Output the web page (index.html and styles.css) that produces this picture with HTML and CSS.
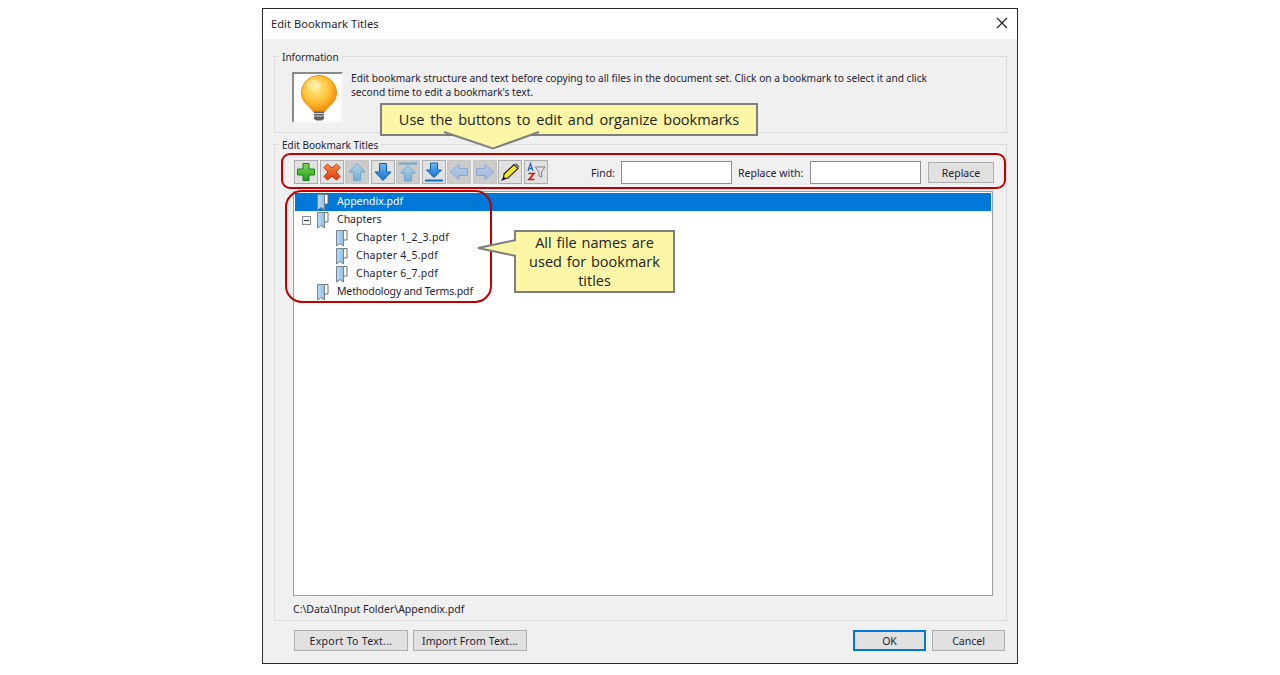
FILE: index.html
```html
<!DOCTYPE html>
<html lang="en">
<head>
<meta charset="utf-8">
<title>Edit Bookmark Titles</title>
<link rel="stylesheet" href="styles.css">
</head>
<body>
<svg class="defs" width="0" height="0" aria-hidden="true">
  <defs>
    <linearGradient id="up" x1="0" y1="0" x2="0" y2="1"><stop offset="0" stop-color="#6db8f2"/><stop offset="1" stop-color="#1271d2"/></linearGradient>
    <linearGradient id="upd" x1="0" y1="0" x2="0" y2="1"><stop offset="0" stop-color="#b4d6ea"/><stop offset="1" stop-color="#74acd2"/></linearGradient>
    <linearGradient id="sided" x1="0" y1="0" x2="0" y2="1"><stop offset="0" stop-color="#bccee6"/><stop offset="1" stop-color="#9db6db"/></linearGradient>
    <linearGradient id="grn" x1="0" y1="0" x2="0" y2="1"><stop offset="0" stop-color="#7fdc52"/><stop offset="1" stop-color="#219c1c"/></linearGradient>
    <linearGradient id="red" x1="0" y1="0" x2="0" y2="1"><stop offset="0" stop-color="#ff8a45"/><stop offset="1" stop-color="#e2380e"/></linearGradient>
    <radialGradient id="bulb" cx="0.42" cy="0.36" r="0.62"><stop offset="0" stop-color="#ffeb90"/><stop offset="0.55" stop-color="#ffc63c"/><stop offset="1" stop-color="#f2900f"/></radialGradient>
    <linearGradient id="bmf" x1="0" y1="0" x2="1" y2="0"><stop offset="0" stop-color="#c2dcf2"/><stop offset="1" stop-color="#8fbce4"/></linearGradient>
    <symbol id="bm" viewBox="0 0 13 18">
      <path d="M8.500 1.500H12V11H8.500z" fill="#fff" stroke="#6c6c6c"/>
      <path d="M1.500 1.500H8.500V17L5 14.500L1.500 17z" fill="url(#bmf)" stroke="#6f8496"/>
    </symbol>
  </defs>
</svg>
<main class="dialog">
  <header class="titlebar">
    <span class="title">Edit Bookmark Titles</span>
    <svg class="close" width="12" height="12" viewBox="0 0 12 12"><path d="M1 1L11 11M11 1L1 11" stroke="#222" stroke-width="1.200" fill="none"/></svg>
  </header>
  <div class="content">
    <fieldset class="group info-group">
      <legend>Information</legend>
      <div class="info-row">
        <div class="bulb-box">
          <svg width="47" height="47" viewBox="0 0 47 47">
            <path d="M25 1.500C15 1.500 7.500 9.500 7.500 19C7.500 26.500 13 30.500 17 34.500L19 37.500H31L33 34.500C37 30.500 42.500 26.500 42.500 19C42.500 9.500 35 1.500 25 1.500z" fill="url(#bulb)" stroke="#e8901c" stroke-width="1"/>
            <ellipse cx="20" cy="11" rx="7" ry="5" fill="#fff6c8" opacity="0.55"/>
            <path d="M20 37.500h10v7l-2 2h-6l-2-2z" fill="#5e5e5e"/>
            <path d="M20 39.500h10M20 42h10" stroke="#d4d4d4" stroke-width="1"/>
          </svg>
        </div>
        <p class="info-text">Edit bookmark structure and text before copying to all files in the document set. Click on a bookmark to select it and click<br>second time to edit a bookmark's text.</p>
      </div>
    </fieldset>
    <fieldset class="group edit-group">
      <legend>Edit Bookmark Titles</legend>
      <div class="toolbar">
        <div class="tools">
          <span class="tool"><svg viewBox="0 0 20 20"><path d="M7 1.500h6v5.500h5.500v6H13v5.500H7V13H1.500V7H7z" fill="url(#grn)" stroke="#1c7c18"/></svg></span>
          <span class="tool"><svg viewBox="0 0 20 20"><path d="M5.500 2L10 6L14.500 2L18 5.500L14 10L18 14.500L14.500 18L10 14L5.500 18L2 14.500L6 10L2 5.500z" fill="url(#red)" stroke="#b8380e"/></svg></span>
          <span class="tool off"><svg viewBox="0 0 20 20"><path d="M10 1.500L18 10H13.500V18.500H6.500V10H2z" fill="url(#upd)" stroke="#6ea6cc"/></svg></span>
          <span class="tool"><svg viewBox="0 0 20 20"><path d="M10 18.500L18 10H13.500V1.500H6.500V10H2z" fill="url(#up)" stroke="#0f5fb0"/></svg></span>
          <span class="tool off"><svg viewBox="0 0 20 20"><path d="M1 1.500H19" stroke="#6ea6cc" stroke-width="2"/><path d="M10 3.500L17.500 11H13.500V19H6.500V11H2.500z" fill="url(#upd)" stroke="#6ea6cc"/></svg></span>
          <span class="tool"><svg viewBox="0 0 20 20"><path d="M10 15.500L17.500 8H13.500V1H6.500V8H2.500z" fill="url(#up)" stroke="#0f5fb0"/><path d="M1 18.500H19" stroke="#0f6fca" stroke-width="2"/></svg></span>
          <span class="tool off"><svg viewBox="0 0 20 20"><path d="M1.500 10L10 2.500V6.500H18.500V13.500H10V17.500z" fill="url(#sided)" stroke="#8aa6d2"/></svg></span>
          <span class="tool off"><svg viewBox="0 0 20 20"><path d="M18.500 10L10 2.500V6.500H1.500V13.500H10V17.500z" fill="url(#sided)" stroke="#8aa6d2"/></svg></span>
          <span class="tool"><svg viewBox="0 0 20 20"><path d="M4 12L14 2.500L18 6.500L8 16L3.500 16.800z" fill="#f8ec1c" stroke="#111" stroke-width="1.100"/><path d="M14 2.500L18 6.500L19.500 4.500L16.500 1.200z" fill="#777"/><path d="M1 19L3.500 14.500L6 17z" fill="#111"/></svg></span>
          <span class="tool"><svg viewBox="0 0 20 20"><path d="M9.500 5H19L15.500 10V15L13 14V10z" fill="#e4e4e4" stroke="#808080"/><path d="M2 9L4.500 1.500L7 9M3 6.500H6" fill="none" stroke="#2a6cc8" stroke-width="1.300"/><path d="M2.500 11.500H8L3 17.500H8.500" fill="none" stroke="#c81e1e" stroke-width="1.700"/></svg></span>
        </div>
        <label class="lbl find-lbl">Find:</label>
        <span class="field"></span>
        <label class="lbl repl-lbl">Replace with:</label>
        <span class="field"></span>
        <button class="btn replace">Replace</button>
      </div>
      <div class="tree">
        <div class="row selected"><svg class="bm"><use href="#bm"/></svg><span>Appendix.pdf</span></div>
        <div class="row"><span class="twist"><i></i></span><svg class="bm"><use href="#bm"/></svg><span>Chapters</span></div>
        <div class="row sub"><svg class="bm"><use href="#bm"/></svg><span>Chapter 1_2_3.pdf</span></div>
        <div class="row sub"><svg class="bm"><use href="#bm"/></svg><span>Chapter 4_5.pdf</span></div>
        <div class="row sub"><svg class="bm"><use href="#bm"/></svg><span>Chapter 6_7.pdf</span></div>
        <div class="row long"><svg class="bm"><use href="#bm"/></svg><span>Methodology and Terms.pdf</span></div>
      </div>
      <p class="status">C:\Data\Input Folder\Appendix.pdf</p>
    </fieldset>
    <footer class="footer">
      <button class="btn wide export">Export To Text...</button>
      <button class="btn wide">Import From Text...</button>
      <span class="spacer"></span>
      <button class="btn action primary">OK</button>
      <button class="btn action">Cancel</button>
    </footer>
  </div>
  <div class="ring ring-tools"></div>
  <div class="ring ring-tree"></div>
  <div class="callout callout-top">
    <svg class="tail tail-top" width="97" height="17" viewBox="0 0 97 17"><path d="M1 -2L50 14.500L96 -2" fill="#fbf7a6" stroke="#7f7f7f" stroke-width="2"/></svg>
    Use the buttons to edit and organize bookmarks
  </div>
  <div class="callout callout-side">
    <svg class="tail tail-side" width="40" height="18" viewBox="0 0 40 18"><path d="M40 1L2 9L40 17" fill="#fbf7a6" stroke="#7f7f7f" stroke-width="2"/></svg>
    All file names are<br>used for bookmark<br>titles
  </div>
</main>
</body>
</html>
```
FILE: styles.css
```css
* { box-sizing: border-box; }
html, body { margin: 0; padding: 0; background: #fff; }
body { font-family: "Noto Sans", sans-serif; font-size: 10.500px; color: #1f2330; padding-top: 8px; overflow: hidden; }
.defs { position: absolute; }
.dialog { position: relative; width: 756px; height: 656px; margin: 0 auto; border: 1px solid #2a2a2a; background: #f0f0f0; display: flex; flex-direction: column; }
.titlebar { height: 30px; background: #fff; display: flex; align-items: center; justify-content: space-between; padding: 0 9px 0 8px; }
.title { font-size: 11.200px; margin-bottom: 2px; }
.close { margin-bottom: 2px; }
.content { flex: 1; display: flex; flex-direction: column; padding: 9px 10px 0 11px; }
.group { margin: 0; border: 1px solid #dcdcdc; min-width: 0; }
.group legend { padding: 2px 3px 0; line-height: 14px; font-size: 10px; }
.info-group { height: 85px; padding: 8px 17px 0; }
.info-group legend { margin-left: -13px; }
.info-row { display: flex; gap: 8px; }
.bulb-box { width: 51px; height: 51px; background: #fff; border: 2px solid; border-color: #8a8a8a #f6f6f6 #f6f6f6 #8a8a8a; display: flex; align-items: center; justify-content: center; flex: none; }
.info-text { margin: -1px 0 0; line-height: 14px; white-space: nowrap; font-size: 10.180px; }
.edit-group { height: 485px; margin-top: 3px; padding: 8px 12px 0 18px; }
.edit-group legend { margin-left: -14px; }
.toolbar { display: flex; align-items: center; height: 24px; }
.tools { display: flex; gap: 1.500px; width: 297px; margin-left: 1px; flex: none; }
.tool { width: 24px; height: 24px; background: #e1e1e1; border: 1px solid #adadad; display: flex; align-items: center; justify-content: center; flex: none; }
.tool svg { width: 20px; height: 20px; display: block; }
.tool.off { background: #cbcbcb; border-color: #c4c4c4; }
.lbl { white-space: nowrap; margin-top: 2px; }
.find-lbl { width: 30px; }
.repl-lbl { width: 72px; margin-left: 6px; }
.field { width: 111px; height: 23px; align-self: flex-end; background: #fff; border: 1px solid #8f8f8f; flex: none; }
.btn { font: inherit; color: inherit; background: #e1e1e1; border: 1px solid #adadad; height: 21px; padding: 0; }
.replace { width: 66px; margin: 1px 0 0 7px; }
.tree { height: 405px; margin: 7px 1px 0 0; background: #fff; border: 1px solid #a0a0a0; padding: 1px; }
.row { height: 18px; display: flex; align-items: center; padding-left: 21px; white-space: nowrap; position: relative; }
.row span:last-child { margin: 0 0 2px 8px; }
.row.sub { padding-left: 40px; letter-spacing: 0.250px; }
.row.long { letter-spacing: -0.150px; }
.row.selected { background: #0078d7; color: #fff; }
.bm { width: 13px; height: 18px; flex: none; }
.twist { position: absolute; left: 7px; top: 5px; width: 9px; height: 9px; border: 1px solid #8a8f96; background: #eef0f2; }
.twist i { display: block; width: 5px; height: 1px; margin: 3px 1px; background: #333; }
.status { margin: 6px 0 0; line-height: 15px; }
.footer { display: flex; margin-top: 9px; gap: 5px; padding: 0 2px 0 20px; }
.spacer { flex: 1; }
.wide { width: 114px; letter-spacing: 0.100px; }
.export { letter-spacing: 0.300px; }
.action { width: 73px; }
.primary { border: 2px solid #0078d7; margin-right: 1px; }
.ring { position: absolute; border: 2px solid #c00000; pointer-events: none; }
.ring-tools { left: 18px; top: 144px; width: 725px; height: 36px; border-radius: 9px; }
.ring-tree { left: 22px; top: 181px; width: 207px; height: 113px; border-radius: 17px; }
.callout { position: absolute; background: #fbf7a6; border: 2px solid #7f7f7f; font-family: "Open Sans", sans-serif; font-size: 14.500px; text-align: center; color: #222; }
.callout-top { left: 117px; top: 94px; width: 378px; height: 33px; line-height: 29px; word-spacing: 2px; white-space: nowrap; }
.callout-side { left: 251px; top: 221px; width: 161px; height: 63px; line-height: 19px; padding-top: 1px; word-spacing: 1px; }
.tail { position: absolute; overflow: visible; }
.tail-top { left: 61px; top: 29px; }
.tail-side { left: -40px; top: 7px; }
```
